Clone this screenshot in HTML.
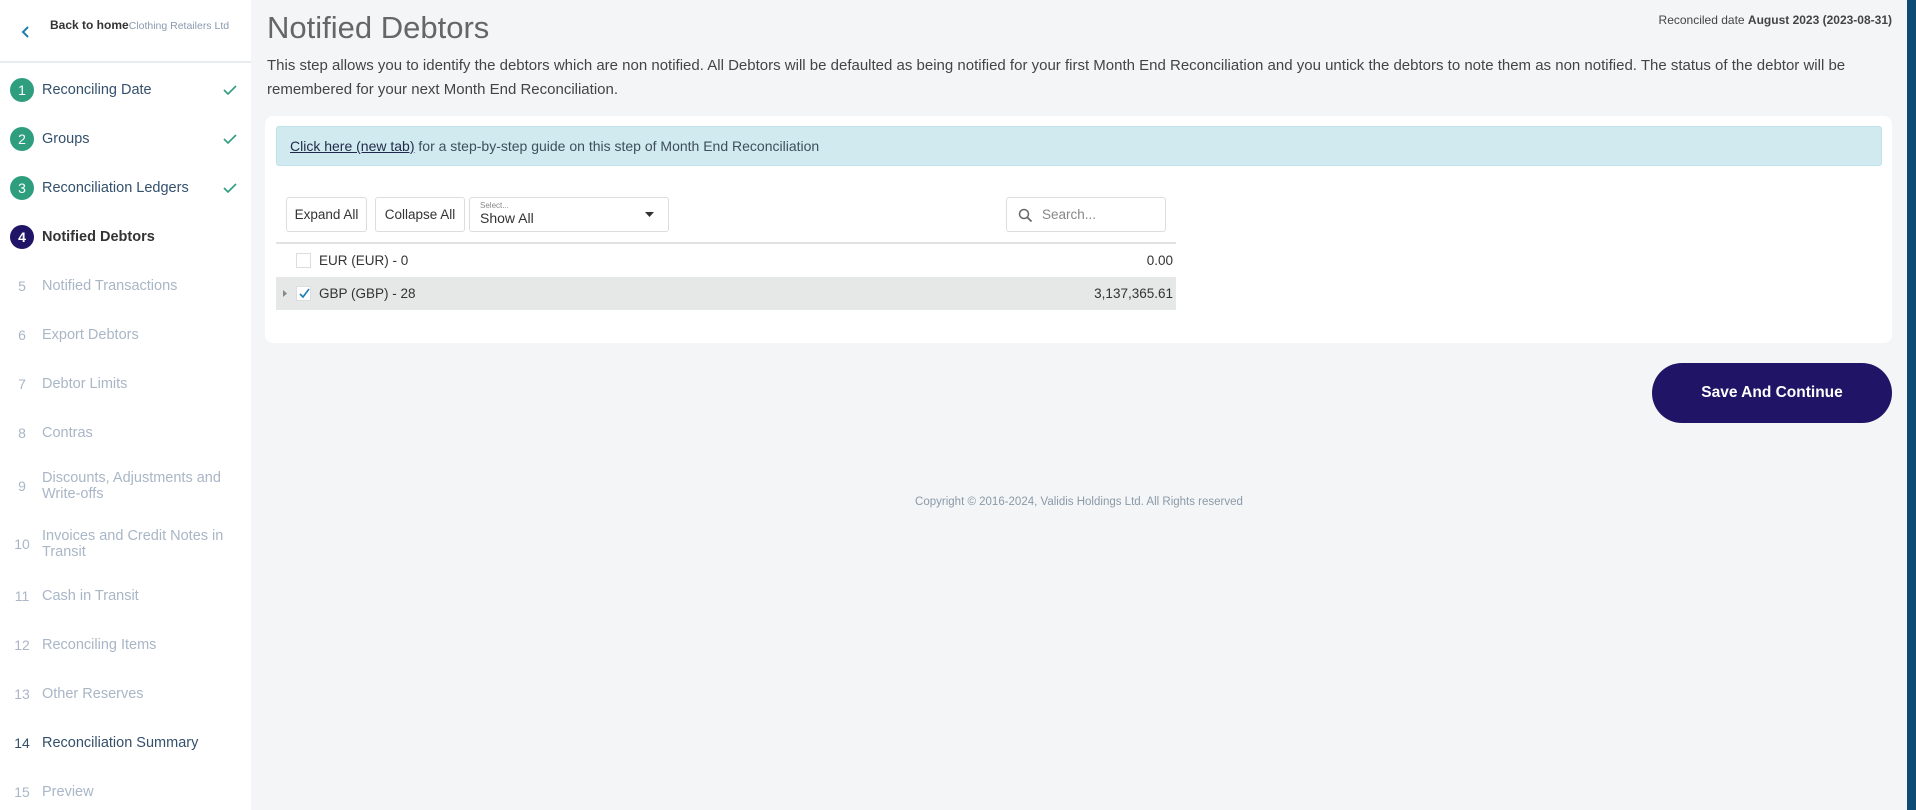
<!DOCTYPE html>
<html><head><style>
*{box-sizing:border-box;margin:0;padding:0}
body{width:1916px;height:810px;overflow:hidden;background:#f4f5f7;font-family:"Liberation Sans",sans-serif;position:relative;color:#333}
.sb{position:absolute;left:0;top:0;width:251px;height:810px;background:#fff}
.hdr{height:63px;border-bottom:2px solid #e9ecef;position:relative}
.hdr .back{position:absolute;left:50px;top:18px;font-size:12px;font-weight:bold;color:#333}
.hdr .back span{font-weight:normal;color:#8a9aae;font-size:10.5px}
.item{position:absolute;left:0;width:251px;display:flex;align-items:center;font-size:14.5px;color:#a9b6c6}
.item .n{width:24px;height:24px;border-radius:50%;margin-left:10px;margin-right:8px;display:flex;align-items:center;justify-content:center;font-size:14px;color:#a9b6c6}
.item .n.g{background:#2e9e7f;color:#fff}
.item .n.d{background:#1f1466;color:#fff;font-weight:bold}
.item.done{color:#34506b}
.item .ck{position:absolute;left:222px;top:50%;margin-top:-8px}
.main{position:absolute;left:251px;top:0;right:9px}
h1{position:absolute;left:16px;top:10px;font-size:31px;font-weight:300;color:#666;font-family:"Liberation Sans",sans-serif}
.rd{position:absolute;right:15px;top:13px;font-size:12px;color:#444}
.desc{position:absolute;left:16px;top:54px;width:1640px;font-size:15px;line-height:24px;color:#444;white-space:nowrap}
.card{position:absolute;left:14px;top:116px;width:1627px;height:227px;background:#fff;border-radius:8px}
.info{position:absolute;left:11px;top:10px;width:1606px;height:40px;background:#d1eaef;border:1px solid #bfe3ea;border-radius:3px;font-size:14px;line-height:38px;padding-left:13px;color:#3d4f5c}
.info u{color:#1f2a4a}
.btn{position:absolute;top:81px;height:35px;border:1px solid #ddd;border-radius:3px;font-size:13.5px;color:#333;line-height:33px;text-align:center;background:#fff}
.tbl{position:absolute;left:11px;top:126px;width:900px;border-top:2px solid #e2e2e2}
.row{height:33px;display:flex;align-items:center;font-size:13.5px;color:#333;position:relative}
.row .amt{position:absolute;right:3px}
.cb{width:15px;height:15px;border:1px solid #ddd;margin-left:20px;margin-right:8px;background:#fff;position:relative}
.save{position:absolute;right:15px;top:363px;width:240px;height:60px;border-radius:30px;background:#1f1466;color:#fff;font-weight:bold;font-size:15.5px;text-align:center;line-height:60px}
.copy{position:absolute;left:0;width:100%;top:496px;text-align:center;font-size:11.5px;color:#8a9aa8}
.strip{position:absolute;right:0;top:0;width:9px;height:810px;background:#0d4a74}
</style></head><body>
<div class="sb">
<div class="hdr">
<svg style="position:absolute;left:20px;top:25px" width="12" height="14" viewBox="0 0 12 14"><path d="M8 2 L3 7 L8 12" stroke="#1a7fb0" stroke-width="2" fill="none"/></svg>
<div class="back">Back to home<span>Clothing Retailers Ltd</span></div>
</div>
<div class="item done" style="top:78px"><div class="n g">1</div>Reconciling Date<svg class="ck" width="16" height="16" viewBox="0 0 16 16"><path d="M2 8 L6 12 L14 4" stroke="#2e9e7f" stroke-width="1.6" fill="none"/></svg></div>
<div class="item done" style="top:127px"><div class="n g">2</div>Groups<svg class="ck" width="16" height="16" viewBox="0 0 16 16"><path d="M2 8 L6 12 L14 4" stroke="#2e9e7f" stroke-width="1.6" fill="none"/></svg></div>
<div class="item done" style="top:176px"><div class="n g">3</div>Reconciliation Ledgers<svg class="ck" width="16" height="16" viewBox="0 0 16 16"><path d="M2 8 L6 12 L14 4" stroke="#2e9e7f" stroke-width="1.6" fill="none"/></svg></div>
<div class="item" style="top:225px;color:#333;font-weight:bold"><div class="n d">4</div>Notified Debtors</div>
<div class="item" style="top:274px"><div class="n">5</div>Notified Transactions</div>
<div class="item" style="top:323px"><div class="n">6</div>Export Debtors</div>
<div class="item" style="top:372px"><div class="n">7</div>Debtor Limits</div>
<div class="item" style="top:421px"><div class="n">8</div>Contras</div>
<div class="item" style="top:470px;line-height:16px"><div class="n">9</div>Discounts, Adjustments and<br>Write-offs</div>
<div class="item" style="top:528px;line-height:16px"><div class="n">10</div>Invoices and Credit Notes in<br>Transit</div>
<div class="item" style="top:584px"><div class="n">11</div>Cash in Transit</div>
<div class="item" style="top:633px"><div class="n">12</div>Reconciling Items</div>
<div class="item" style="top:682px"><div class="n">13</div>Other Reserves</div>
<div class="item" style="top:731px;color:#34506b"><div class="n" style="color:#34506b">14</div>Reconciliation Summary</div>
<div class="item" style="top:780px"><div class="n">15</div>Preview</div>
</div>
<div class="main">
<h1>Notified Debtors</h1>
<div class="rd">Reconciled date <b>August 2023 (2023-08-31)</b></div>
<div class="desc">This step allows you to identify the debtors which are non notified. All Debtors will be defaulted as being notified for your first Month End Reconciliation and you untick the debtors to note them as non notified. The status of the debtor will be<br>remembered for your next Month End Reconciliation.</div>
<div class="card">
<div class="info"><u>Click here (new tab)</u> for a step-by-step guide on this step of Month End Reconciliation</div>
<div class="btn" style="left:21px;width:81px">Expand All</div>
<div class="btn" style="left:110px;width:90px">Collapse All</div>
<div class="btn" style="left:204px;width:200px;text-align:left;padding-left:10px;line-height:normal">
<div style="font-size:8px;color:#888;margin-top:3px">Select...</div><div style="font-size:14px">Show All</div>
<svg style="position:absolute;right:14px;top:14px" width="9" height="6"><path d="M0 0 L9 0 L4.5 5z" fill="#333"/></svg></div>
<div class="btn" style="left:741px;width:160px;text-align:left;padding-left:35px;color:#888">
<svg style="position:absolute;left:11px;top:10px" width="15" height="15" viewBox="0 0 15 15"><circle cx="6" cy="6" r="4.5" stroke="#666" stroke-width="1.5" fill="none"/><path d="M9.5 9.5 L13.5 13.5" stroke="#666" stroke-width="1.7"/></svg>Search...</div>
<div class="tbl">
<div class="row"><div class="cb"></div>EUR (EUR) - 0<span class="amt">0.00</span></div>
<div class="row" style="background:#e6e7e7"><svg style="position:absolute;left:7px;top:13px" width="4" height="7"><path d="M0 0 L4 3.5 L0 7z" fill="#888"/></svg><div class="cb"><svg style="position:absolute;left:1px;top:0" width="13" height="13"><path d="M2 7 L5 10 L11 2" stroke="#1a7fb0" stroke-width="1.6" fill="none"/></svg></div>GBP (GBP) - 28<span class="amt">3,137,365.61</span></div>
</div>
</div>
<div class="save">Save And Continue</div>
<div class="copy">Copyright © 2016-2024, Validis Holdings Ltd. All Rights reserved</div>
</div>
<div class="strip"></div>
</body></html>
